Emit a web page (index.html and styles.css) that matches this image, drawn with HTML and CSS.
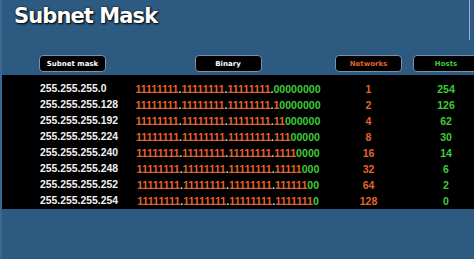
FILE: index.html
```html
<!DOCTYPE html>
<html>
<head>
<meta charset="utf-8">
<link rel="stylesheet" href="styles.css">
</head>
<body>
<div class="page">
  <div class="edge-line"></div>
  <h1 class="title">Subnet Mask</h1>
  <div class="grid head">
    <div class="c1"><span class="btn white">Subnet mask</span></div>
    <div class="c2"><span class="btn white">Binary</span></div>
    <div class="c3"><span class="btn orange">Networks</span></div>
    <div class="c4"><span class="btn green">Hosts</span></div>
  </div>
  <div class="band">
    <div class="grid row"><div class="c1 mask">255.255.255.0</div><div class="c2 bin"><span class="o">11111111</span><span class="d">.</span><span class="o">11111111</span><span class="d">.</span><span class="o">11111111</span><span class="d">.</span><span class="g">00000000</span></div><div class="c3 num o">1</div><div class="c4 num g">254</div></div>
    <div class="grid row"><div class="c1 mask">255.255.255.128</div><div class="c2 bin"><span class="o">11111111</span><span class="d">.</span><span class="o">11111111</span><span class="d">.</span><span class="o">11111111</span><span class="d">.</span><span class="o">1</span><span class="g">0000000</span></div><div class="c3 num o">2</div><div class="c4 num g">126</div></div>
    <div class="grid row"><div class="c1 mask">255.255.255.192</div><div class="c2 bin"><span class="o">11111111</span><span class="d">.</span><span class="o">11111111</span><span class="d">.</span><span class="o">11111111</span><span class="d">.</span><span class="o">11</span><span class="g">000000</span></div><div class="c3 num o">4</div><div class="c4 num g">62</div></div>
    <div class="grid row"><div class="c1 mask">255.255.255.224</div><div class="c2 bin"><span class="o">11111111</span><span class="d">.</span><span class="o">11111111</span><span class="d">.</span><span class="o">11111111</span><span class="d">.</span><span class="o">111</span><span class="g">00000</span></div><div class="c3 num o">8</div><div class="c4 num g">30</div></div>
    <div class="grid row"><div class="c1 mask">255.255.255.240</div><div class="c2 bin"><span class="o">11111111</span><span class="d">.</span><span class="o">11111111</span><span class="d">.</span><span class="o">11111111</span><span class="d">.</span><span class="o">1111</span><span class="g">0000</span></div><div class="c3 num o">16</div><div class="c4 num g">14</div></div>
    <div class="grid row"><div class="c1 mask">255.255.255.248</div><div class="c2 bin"><span class="o">11111111</span><span class="d">.</span><span class="o">11111111</span><span class="d">.</span><span class="o">11111111</span><span class="d">.</span><span class="o">11111</span><span class="g">000</span></div><div class="c3 num o">32</div><div class="c4 num g">6</div></div>
    <div class="grid row"><div class="c1 mask">255.255.255.252</div><div class="c2 bin"><span class="o">11111111</span><span class="d">.</span><span class="o">11111111</span><span class="d">.</span><span class="o">11111111</span><span class="d">.</span><span class="o">111111</span><span class="g">00</span></div><div class="c3 num o">64</div><div class="c4 num g">2</div></div>
    <div class="grid row"><div class="c1 mask">255.255.255.254</div><div class="c2 bin"><span class="o">11111111</span><span class="d">.</span><span class="o">11111111</span><span class="d">.</span><span class="o">11111111</span><span class="d">.</span><span class="o">1111111</span><span class="g">0</span></div><div class="c3 num o">128</div><div class="c4 num g">0</div></div>
  </div>
</div>
</body>
</html>
```
FILE: styles.css
```css
html, body {
  margin: 0;
  padding: 0;
  overflow: hidden;
}
body {
  width: 474px;
  height: 259px;
  background: #2d5a80;
}
.page {
  position: relative;
  width: 474px;
  height: 259px;
  background: #2d5a80;
  border-left: 2px solid #3a6890;
  box-sizing: border-box;
}
.edge-line {
  position: absolute;
  left: 467px;
  top: 0;
  width: 1px;
  height: 40px;
  background: #8fb2d2;
}
.title {
  margin: 0;
  padding: 3px 0 0 12px;
  height: 53px;
  box-sizing: border-box;
  font-family: "DejaVu Sans", sans-serif;
  font-weight: bold;
  font-size: 21px;
  line-height: 26px;
  letter-spacing: -0.9px;
  color: #ffffff;
  text-shadow: 1px 1px 2px #000, 0 0 2px #0a1c2c;
}
.grid {
  display: grid;
  grid-template-columns: 94px 190px 91px 64px;
  padding-left: 37px;
}
.head {
  height: 17px;
  margin-top: 2px;
  align-items: center;
}
.head .c1 { justify-self: start; }
.head .c2, .head .c3, .head .c4 { justify-self: center; }
.btn {
  display: flex;
  align-items: center;
  justify-content: center;
  width: 67px;
  height: 17px;
  box-sizing: border-box;
  background: #000;
  border: 1px solid #7f8fa2;
  border-radius: 4px;
  font-family: "DejaVu Sans", sans-serif;
  font-weight: bold;
  font-size: 7px;
}
.white { color: #ffffff; }
.orange { color: #e2652b; }
.green { color: #3ecb3b; }
.band {
  margin-top: 3px;
  background: #000;
  height: 134px;
  box-sizing: border-box;
  padding-top: 6px;
}
.row {
  height: 16px;
  line-height: 16px;
  font-family: "Liberation Sans", Arial, sans-serif;
  font-weight: bold;
  align-items: center;
}
.mask {
  color: #f2f2f2;
  font-size: 10.4px;
  padding-left: 1px;
}
.bin {
  font-size: 10.6px;
  text-align: center;
  padding-left: 0;
}
.num {
  font-size: 10.5px;
  text-align: center;
}
.o { color: #e2652b; }
.g { color: #3ecb3b; }
.d { color: #d8d8d8; }
```
